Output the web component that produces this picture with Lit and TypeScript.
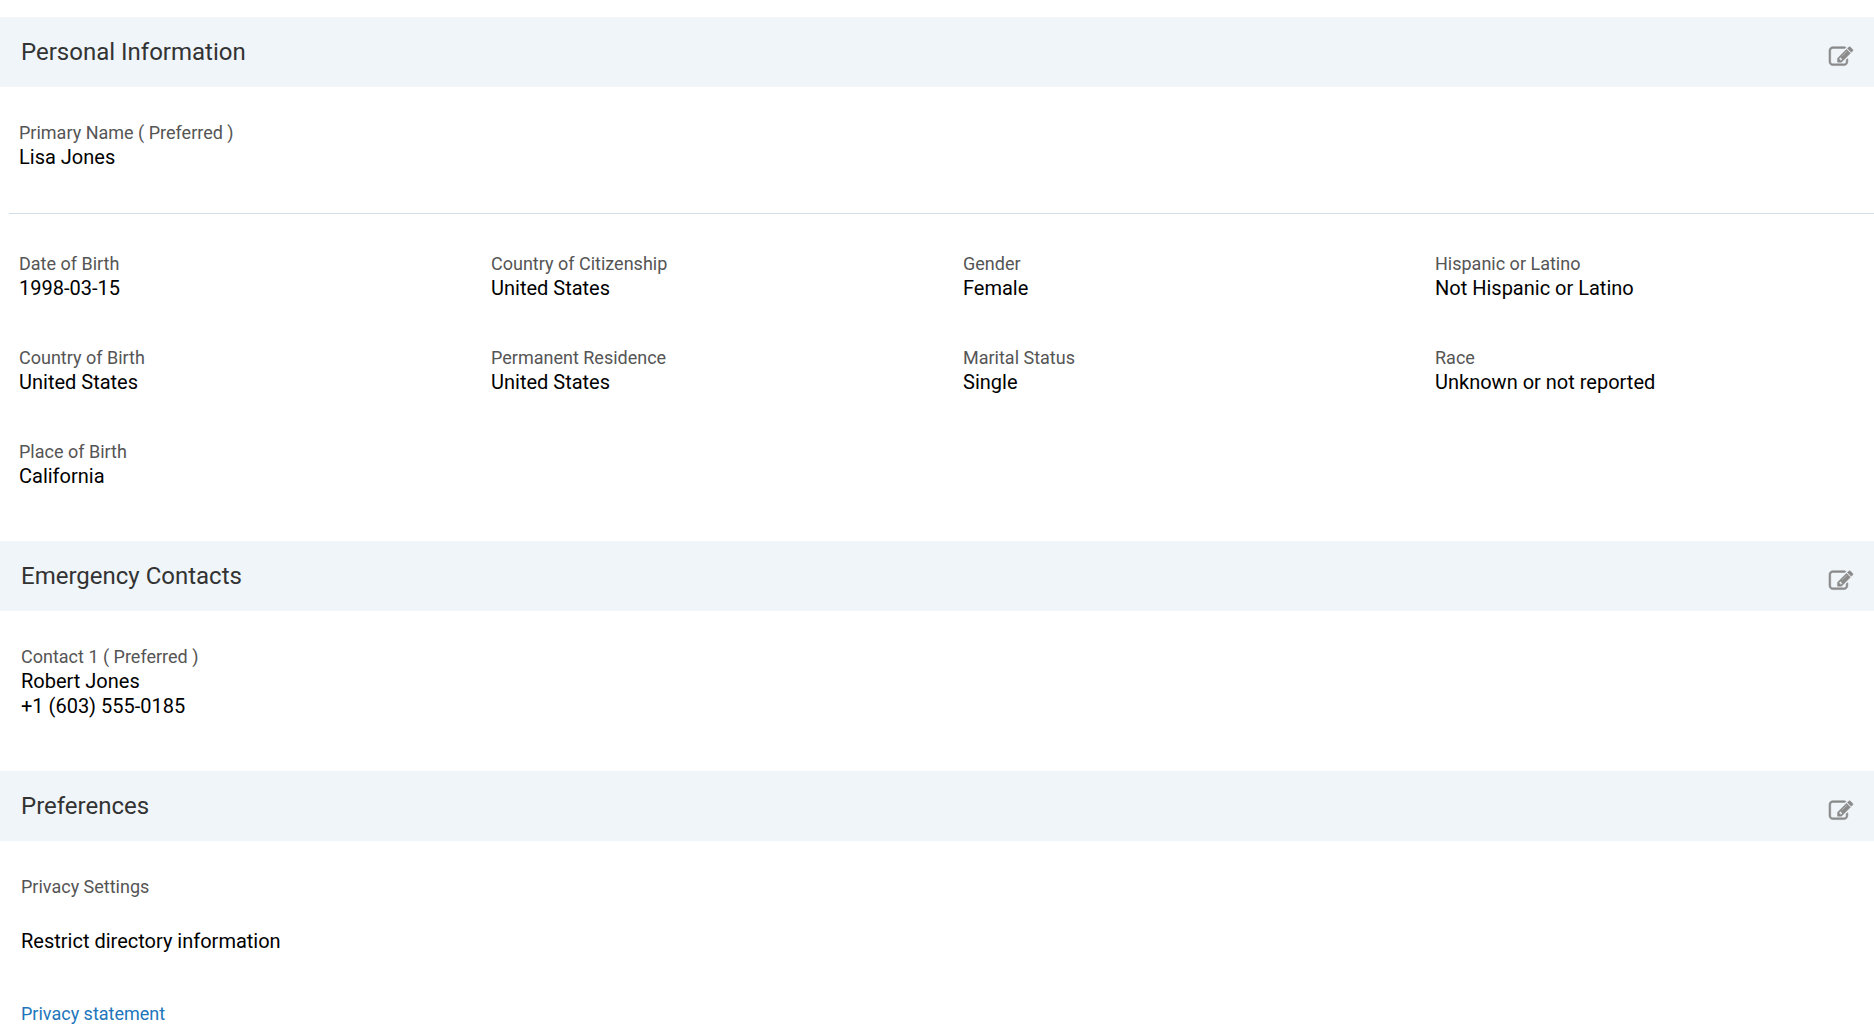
import { LitElement, html, css, svg } from "lit";
import { customElement, property } from "lit/decorators.js";

interface Field {
  label: string;
  values: string[];
}

const primaryName: Field = { label: "Primary Name ( Preferred )", values: ["Lisa Jones"] };

const details: Field[] = [
  { label: "Date of Birth", values: ["1998-03-15"] },
  { label: "Country of Citizenship", values: ["United States"] },
  { label: "Gender", values: ["Female"] },
  { label: "Hispanic or Latino", values: ["Not Hispanic or Latino"] },
  { label: "Country of Birth", values: ["United States"] },
  { label: "Permanent Residence", values: ["United States"] },
  { label: "Marital Status", values: ["Single"] },
  { label: "Race", values: ["Unknown or not reported"] },
  { label: "Place of Birth", values: ["California"] },
];

const contact: Field = {
  label: "Contact 1 ( Preferred )",
  values: ["Robert Jones", "+1 (603) 555-0185"],
};

const editShape = svg`<path d="M888 1184l116-116-152-152-116 116v56h96v96h56zm440-720q-16-16-33 1l-350 350q-17 17-1 33t33-1l350-350q17-17 1-33zm80 594v190q0 119-84.5 203.5t-203.5 84.5h-832q-119 0-203.5-84.5t-84.5-203.5v-832q0-119 84.5-203.5t203.5-84.5h832q63 0 117 25 15 7 18 23 3 17-9 29l-49 49q-14 14-32 8-23-6-45-6h-832q-66 0-113 47t-47 113v832q0 66 47 113t113 47h832q66 0 113-47t47-113v-126q0-13 9-22l64-64q15-15 35-7t20 29zm-96-738l288 288-672 672h-288v-288zm444 132l-92 92-288-288 92-92q28-28 68-28t68 28l152 152q28 28 28 68t-28 68z"/>`;

/** Tinted title bar with an edit button. */
@customElement("section-header")
export class SectionHeader extends LitElement {
  @property() heading = "";

  static styles = css`
    :host {
      display: block;
    }
    .bar {
      display: flex;
      justify-content: space-between;
      align-items: flex-start;
      background: #eff5f9;
      padding: 20px 21px;
    }
    .title {
      margin: 0;
      font-size: 24px;
      font-weight: 400;
      line-height: 30px;
      color: #333;
    }
    .edit {
      display: block;
      margin: 8px 0 0;
      padding: 0;
      border: 0;
      background: none;
      color: #8a8a8a;
      cursor: pointer;
      height: 22px;
    }
    .icon {
      display: block;
      width: 24px;
      height: 24px;
      fill: currentColor;
      stroke: currentColor;
      stroke-width: 40;
      overflow: visible;
    }
  `;

  render() {
    return html`
      <header class="bar">
        <h2 class="title">${this.heading}</h2>
        <button class="edit" type="button" aria-label="Edit ${this.heading}">
          <svg class="icon" viewBox="0 0 1792 1792" aria-hidden="true">${editShape}</svg>
        </button>
      </header>
    `;
  }
}

@customElement("app-root")
export class AppRoot extends LitElement {
  static styles = css`
    :host {
      display: block;
      padding-top: 17px;
      font-family: Roboto, "Liberation Sans", sans-serif;
      color: #000;
      background: #fff;
    }
    .name {
      margin: 0 0 0 9px;
      padding: 33px 10px 43px;
      border-bottom: 1px solid #d3dfe8;
    }
    .grid {
      display: grid;
      grid-template-columns: repeat(4, minmax(0, 1fr));
      gap: 44px 33px;
      margin: 0;
      padding: 37px 0 52px 19px;
    }
    .block {
      margin: 0;
      padding: 33px 21px 52px;
    }
    .label,
    .value,
    .link {
      margin: 0;
      line-height: 25px;
    }
    .label,
    .link {
      font-size: 18px;
    }
    .label {
      color: #555;
      font-weight: 400;
    }
    .value {
      font-size: 20px;
    }
    .setting {
      padding: 30px 0 47px;
    }
    .link {
      display: block;
      width: fit-content;
      color: #2176bb;
      text-decoration: none;
    }
    .preferences {
      padding-bottom: 9px;
    }
  `;

  private field(f: Field) {
    return html`<div>
      <dt class="label">${f.label}</dt>
      ${f.values.map((v) => html`<dd class="value">${v}</dd>`)}
    </div>`;
  }

  render() {
    return html`
      <main>
        <section>
          <section-header heading="Personal Information"></section-header>
          <dl class="name">${this.field(primaryName)}</dl>
          <dl class="grid">${details.map((f) => this.field(f))}</dl>
        </section>
        <section>
          <section-header heading="Emergency Contacts"></section-header>
          <dl class="block">${this.field(contact)}</dl>
        </section>
        <section>
          <section-header heading="Preferences"></section-header>
          <div class="block preferences">
            <h3 class="label">Privacy Settings</h3>
            <p class="value setting">Restrict directory information</p>
            <a class="link" href="#privacy">Privacy statement</a>
          </div>
        </section>
      </main>
    `;
  }
}
